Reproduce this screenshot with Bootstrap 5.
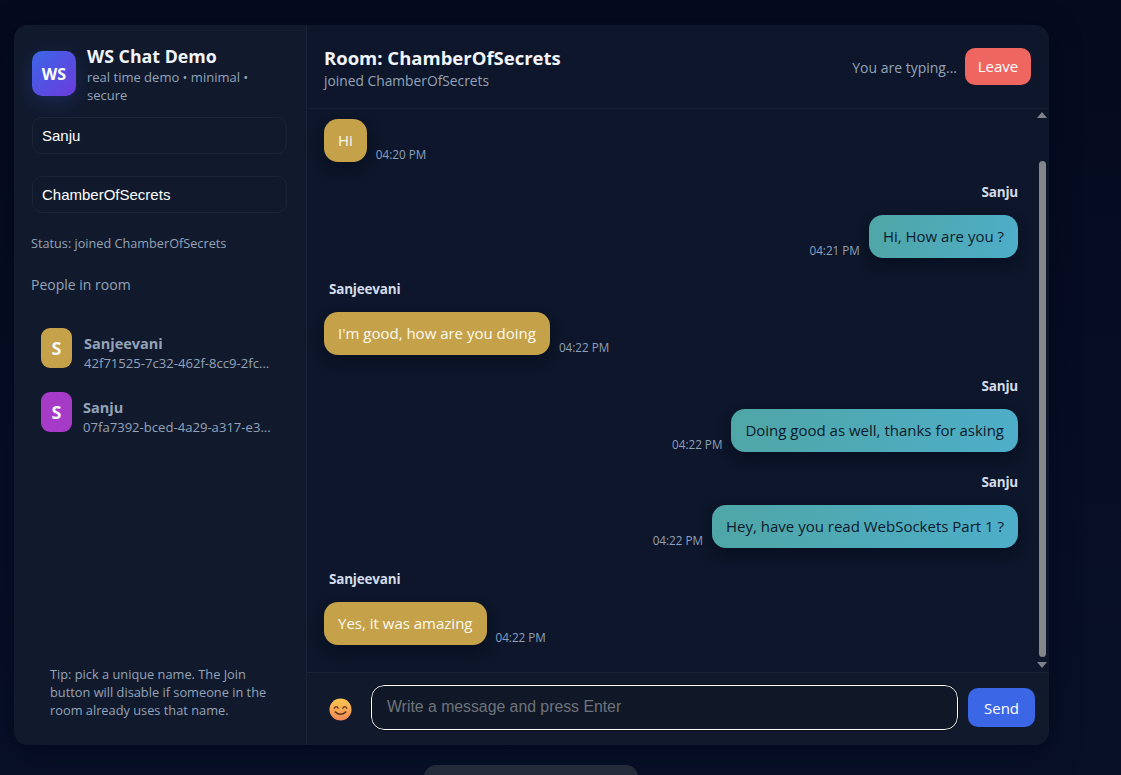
<!DOCTYPE html>
<html lang="en">
<head>
  <meta charset="UTF-8" />
  <meta name="viewport" content="width=device-width, initial-scale=1.0">
  <title>WS Chat Demo</title>
  <link href="https://cdn.jsdelivr.net/npm/bootstrap@5.3.0/dist/css/bootstrap.min.css" rel="stylesheet">
  <style>
    html, body { height: 775px; overflow: hidden; }
    body { background: linear-gradient(180deg, #050a1e, #081028); font-family: "Open Sans", "Noto Sans", sans-serif; color: #e6edf7; }
    .chat-shell { width: 1035px; height: 720px; margin: 25px 0 0 14px; border-radius: 14px; overflow: hidden; background: #0d162a; box-shadow: 0 8px 30px rgba(2,6,23,.6); }
    .side { width: 293px; flex: none; background: #111a2d; border-right: 1px solid #1a2336; padding: 26px 19px 26px 18px; }
    .logo { width: 44px; height: 45px; border-radius: 10px; background: linear-gradient(135deg, #3b66e6, #6c3bdc); color: #fff; font-weight: 700; font-size: 16px; box-shadow: 0 6px 18px rgba(59,102,230,.2); }
    .brand-name { font-size: 17.8px; font-weight: 700; line-height: 22px; margin: -6px 0 1px; color: #f1f5fb; }
    .brand-sub { font-size: 13px; line-height: 18px; color: #94a3b8; width: 190px; }
    .side-input { display: block; width: 255px; height: 37px; background: transparent; border: 1px solid #1c2538; border-radius: 10px; color: #fff; font: 15px "Liberation Sans", sans-serif; padding: 0 9px; }
    .status-line { font-size: 12.7px; color: #94a3b8; line-height: 18px; margin: 21px 0 0 -1px; }
    .people-title { font-size: 14px; color: #94a3b8; line-height: 20px; margin: 23px 0 0 -1px; }
    .people-list { gap: 19px; margin-top: 33px; padding-left: 9px; }
    .avatar-tile { width: 31px; height: 40px; border-radius: 9px; color: #f5f7fb; font-weight: 700; font-size: 18px; flex: none; }
    .person-text { padding-top: 6px; }
    .person-name { font-size: 14.5px; font-weight: 700; line-height: 19px; color: #94a3b8; }
    .person-id { font-size: 13.1px; line-height: 20px; color: #94a3b8; white-space: nowrap; }
    .tip-text { font-size: 12.8px; line-height: 18px; color: #94a3b8; padding: 0 0 0 18px; }
    .chat-head { height: 84px; border-bottom: 1px solid #161f32; padding: 0 18px 0 17px; flex: none; }
    .room-title { font-size: 18.5px; font-weight: 700; line-height: 24px; color: #f1f5fb; margin-top: 4px; }
    .room-sub { font-size: 13.8px; line-height: 21px; color: #94a3b8; }
    .typing { font-size: 14px; color: #94a3b8; padding-top: 2px; }
    .btn-leave { background: #ef6660; color: #fff; border: 0; width: 66px; height: 37px; padding: 0 0 2px; border-radius: 10px; font: 15px "Open Sans", sans-serif; }
    .msg-scroll { min-height: 0; overflow: hidden; }
    .msg-list { padding: 10px 19px 0 17px; }
    .msg-block { margin-bottom: 20.75px; }
    .msg-block.first { margin-bottom: 20px; }
    .msg-who { font-size: 13.500px; letter-spacing: -.2px; font-weight: 700; line-height: 21px; color: #d3dceb; margin-bottom: 12px; }
    .bubble { font-size: 15px; line-height: 23px; padding: 10px 14px; border-radius: 14px; box-shadow: 0 6px 14px rgba(2,6,23,.45); }
    .bubble-them { background: #c5a14a; color: #fdfaf0; }
    .bubble-me { background: linear-gradient(100deg, #4fa6a6, #4eaec9); color: #0c1a2b; }
    .stamp { font-size: 11.7px; line-height: 18px; color: #8ea0bc; margin: 0 9px -1px 9px; white-space: nowrap; }
    .fake-bar { width: 10px; flex: none; margin-right: 2px; padding: 3px 0 3px; }
    .bar-up, .bar-down { width: 0; height: 0; border-left: 5px solid transparent; border-right: 5px solid transparent; }
    .bar-up { border-bottom: 6px solid #7f8288; }
    .bar-down { border-top: 6px solid #7f8288; }
    .bar-thumb { width: 7px; height: 496px; background: #85868a; border-radius: 4px; margin: 43px 0 5px 1.5px; }
    .composer { height: 73px; flex: none; background: #111a2d; border-top: 1px solid #1a2336; padding: 0 14px 0 22px; }
    .emoji-face { width: 23px; height: 23px; flex: none; }
    .msg-input { width: 587px; height: 45px; background: #101827; border: 1px solid #fff; outline: 1px solid #0a0d14; border-radius: 13px; color: #fff; font: 15.8px "Liberation Sans", sans-serif; padding: 0 15px 2px; margin: 0 10px 3px 19px; }
    .msg-input::placeholder { color: #6f737b; opacity: 1; }
    .btn-send { background: #3b66e6; color: #fff; border: 0; width: 67px; height: 39px; padding: 0; border-radius: 10px; font: 15px "Open Sans", sans-serif; margin-bottom: 3px; }
    .toast-stub { width: 214px; height: 40px; margin: 20px 0 0 424px; background: #232a39; border-radius: 12px; }
  </style>
</head>
<body>
  <div class="chat-shell d-flex">
    <!-- Sidebar -->
    <div class="side d-flex flex-column">
      <div class="d-flex" style="gap:11px">
        <div class="logo d-flex align-items-center justify-content-center flex-shrink-0">WS</div>
        <div>
          <div class="brand-name">WS Chat Demo</div>
          <div class="brand-sub">real time demo • minimal • secure</div>
        </div>
      </div>
      <input class="side-input" style="margin-top:13px" type="text" value="Sanju">
      <input class="side-input" style="margin-top:22px" type="text" value="ChamberOfSecrets">
      <div class="status-line">Status: joined ChamberOfSecrets</div>
      <div class="people-title">People in room</div>
      <div class="people-list d-flex flex-column">
        <div class="d-flex align-items-start" style="gap:12px">
          <div class="avatar-tile d-flex align-items-center justify-content-center" style="background:#c5a14a">S</div>
          <div class="person-text">
            <div class="person-name">Sanjeevani</div>
            <div class="person-id">42f71525-7c32-462f-8cc9-2fc...</div>
          </div>
        </div>
        <div class="d-flex align-items-start" style="gap:11px">
          <div class="avatar-tile d-flex align-items-center justify-content-center" style="background:#a63bc8">S</div>
          <div class="person-text">
            <div class="person-name">Sanju</div>
            <div class="person-id">07fa7392-bced-4a29-a317-e3...</div>
          </div>
        </div>
      </div>
      <div class="tip-text mt-auto">Tip: pick a unique name. The Join button will disable if someone in the room already uses that name.</div>
    </div>

    <!-- Chat -->
    <div class="flex-grow-1 d-flex flex-column" style="min-width:0">
      <div class="chat-head d-flex justify-content-between align-items-center">
        <div>
          <div class="room-title">Room: ChamberOfSecrets</div>
          <div class="room-sub">joined ChamberOfSecrets</div>
        </div>
        <div class="d-flex align-items-center gap-2">
          <span class="typing">You are typing...</span>
          <button class="btn-leave">Leave</button>
        </div>
      </div>

      <div class="msg-scroll flex-grow-1 d-flex">
        <div class="msg-list flex-grow-1" style="min-width:0">
          <div class="msg-block first d-flex align-items-end">
            <div class="bubble bubble-them">Hi</div>
            <div class="stamp">04:20 PM</div>
          </div>
          <div class="msg-block">
            <div class="msg-who text-end">Sanju</div>
            <div class="d-flex justify-content-end align-items-end">
              <div class="stamp">04:21 PM</div>
              <div class="bubble bubble-me">Hi, How are you ?</div>
            </div>
          </div>
          <div class="msg-block">
            <div class="msg-who" style="padding-left:5px">Sanjeevani</div>
            <div class="d-flex align-items-end">
              <div class="bubble bubble-them">I'm good, how are you doing</div>
              <div class="stamp">04:22 PM</div>
            </div>
          </div>
          <div class="msg-block">
            <div class="msg-who text-end">Sanju</div>
            <div class="d-flex justify-content-end align-items-end">
              <div class="stamp">04:22 PM</div>
              <div class="bubble bubble-me">Doing good as well, thanks for asking</div>
            </div>
          </div>
          <div class="msg-block">
            <div class="msg-who text-end">Sanju</div>
            <div class="d-flex justify-content-end align-items-end">
              <div class="stamp">04:22 PM</div>
              <div class="bubble bubble-me">Hey, have you read WebSockets Part 1 ?</div>
            </div>
          </div>
          <div class="msg-block">
            <div class="msg-who" style="padding-left:5px">Sanjeevani</div>
            <div class="d-flex align-items-end">
              <div class="bubble bubble-them">Yes, it was amazing</div>
              <div class="stamp">04:22 PM</div>
            </div>
          </div>
        </div>
        <div class="fake-bar d-flex flex-column">
          <div class="bar-up"></div>
          <div class="bar-thumb"></div>
          <div class="bar-down"></div>
        </div>
      </div>

      <div class="composer d-flex align-items-center">
        <svg class="emoji-face" viewBox="0 0 24 24" role="img" aria-label="smile">
          <defs><linearGradient id="faceFill" x1="0" y1="0" x2="0" y2="1"><stop offset="0" stop-color="#fbc64e"/><stop offset="1" stop-color="#f0895a"/></linearGradient></defs>
          <circle cx="12" cy="12" r="11.5" fill="url(#faceFill)"/>
          <path d="M5.5 10.5q2-3 4 0M14.500 10.500q2-3 4 0" fill="none" stroke="#5a3320" stroke-width="1.500" stroke-linecap="round"/>
          <path d="M6.500 14.500q5.500 5 11 0" fill="none" stroke="#5a3320" stroke-width="1.500" stroke-linecap="round"/>
        </svg>
        <input class="msg-input" type="text" placeholder="Write a message and press Enter">
        <button class="btn-send">Send</button>
      </div>
    </div>
  </div>
  <div class="toast-stub"></div>

  <script src="https://cdn.jsdelivr.net/npm/bootstrap@5.3.0/dist/js/bootstrap.bundle.min.js"></script>
</body>
</html>
